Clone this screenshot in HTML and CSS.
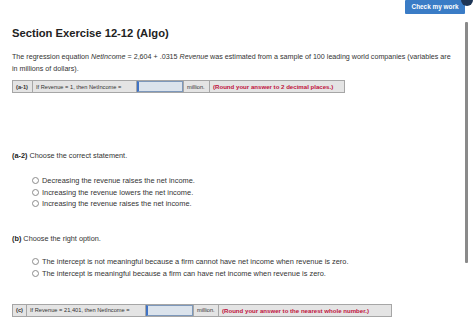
FILE: index.html
```html
<!DOCTYPE html>
<html lang="en">
<head>
    <meta charset="UTF-8">
    <meta name="viewport" content="width=device-width, initial-scale=1.0">
    <title>Section Exercise 12-12</title>
    <link rel="stylesheet" href="styles.css">
</head>
<body>

<header class="topbar">
    <div class="check-wrap">
        <a href="#" class="btn-check">Check my work</a>
        <span class="badge" aria-label="help"></span>
    </div>
</header>

<div class="page">
    <main class="content">
        <h1 class="title">Section Exercise 12-12 (Algo)</h1>

        <p class="intro">
            The regression equation <em>NetIncome</em> = 2,604 + .0315 <em>Revenue</em> was estimated from a sample of 100 leading world companies (variables are in millions of dollars).
        </p>

        <table class="answer-row row-a1">
            <colgroup>
                <col class="c-tag"><col class="c-label"><col class="c-field"><col class="c-unit"><col class="c-hint">
            </colgroup>
            <tr>
                <td class="tag">(a-1)</td>
                <td class="label">If Revenue = 1, then NetIncome =</td>
                <td class="field"><input type="text" class="answer"></td>
                <td class="unit">million.</td>
                <td class="hint">(Round your answer to 2 decimal places.)</td>
            </tr>
        </table>

        <div class="question q-a2">
            <p class="prompt"><b>(a-2)</b> Choose the correct statement.</p>
            <ul class="options">
                <li><span class="radio"></span>Decreasing the revenue raises the net income.</li>
                <li><span class="radio"></span>Increasing the revenue lowers the net income.</li>
                <li><span class="radio"></span>Increasing the revenue raises the net income.</li>
            </ul>
        </div>

        <div class="question q-b">
            <p class="prompt"><b>(b)</b> Choose the right option.</p>
            <ul class="options">
                <li><span class="radio"></span>The intercept is not meaningful because a firm cannot have net income when revenue is zero.</li>
                <li><span class="radio"></span>The intercept is meaningful because a firm can have net income when revenue is zero.</li>
            </ul>
        </div>

        <table class="answer-row row-c">
            <colgroup>
                <col class="c-tag"><col class="c-label"><col class="c-field"><col class="c-unit"><col class="c-hint">
            </colgroup>
            <tr>
                <td class="tag">(c)</td>
                <td class="label">If Revenue = 21,401, then NetIncome =</td>
                <td class="field"><input type="text" class="answer"></td>
                <td class="unit">million.</td>
                <td class="hint">(Round your answer to the nearest whole number.)</td>
            </tr>
        </table>
    </main>

    <div class="scroll-track">
        <div class="scroll-thumb"></div>
    </div>
</div>

</body>
</html>
```

FILE: styles.css
```css
body {
    margin: 0;
    font-family: 'Liberation Sans', Arial, sans-serif;
    color: #333333;
    background: #ffffff;
    overflow: hidden;
}

.topbar {
    height: 14px;
    display: flex;
    justify-content: flex-end;
    padding-right: 9px;
}

.check-wrap {
    position: relative;
}

.btn-check {
    display: block;
    width: 60px;
    height: 14px;
    line-height: 13px;
    text-align: center;
    background-color: #3a7cc6;
    color: #ffffff;
    font-size: 6.4px;
    font-weight: bold;
    text-decoration: none;
    border-radius: 1px;
}

.badge {
    position: absolute;
    top: -6px;
    right: -8px;
    width: 12px;
    height: 12px;
    border-radius: 50%;
    background-color: #1d3557;
}

.page {
    display: flex;
}

.content {
    flex: 1;
    padding-left: 12px;
}

.scroll-track {
    width: 4px;
    margin: 8px 5px 0 10px;
}

.scroll-thumb {
    width: 3px;
    height: 241px;
    background-color: #8a8a8a;
    border-radius: 1px;
}

.title {
    font-size: 11.2px;
    font-weight: bold;
    color: #222222;
    margin: 13px 0 0;
    line-height: 12px;
}

.intro {
    font-size: 7.15px;
    line-height: 12px;
    margin: 12px 0 0;
    padding-right: 4px;
}

/* answer rows */

.answer-row {
    border-collapse: collapse;
    table-layout: fixed;
    background-color: #e4e4e4;
    font-size: 5.7px;
    margin-top: 5px;
}

.answer-row td {
    border: 1px solid #a6a6a6;
    height: 11px;
    padding: 0 3px;
    white-space: nowrap;
    overflow: hidden;
}

.answer-row .tag {
    font-weight: bold;
}

.answer-row .field {
    padding: 0;
    background-color: #ffffff;
}

.answer {
    display: block;
    width: 100%;
    height: 11px;
    box-sizing: border-box;
    margin: 0;
    border: 1px solid #7d98bb;
    border-left: 2px solid #3f72c4;
    background-color: #dbe3ec;
    padding: 0;
}

.answer-row .hint {
    color: #c0123c;
    font-weight: bold;
    font-size: 6.1px;
}

.row-a1 { width: 333px; }
.row-a1 .c-tag { width: 20px; }
.row-a1 .c-label { width: 104px; }
.row-a1 .c-field { width: 47px; }
.row-a1 .c-unit { width: 26px; }

.row-c { width: 380px; }
.row-c .c-tag { width: 14px; }
.row-c .c-label { width: 119px; }
.row-c .c-field { width: 48px; }
.row-c .c-unit { width: 25px; }

/* multiple choice */

.question {
    font-size: 7.3px;
}

.q-a2 {
    margin-top: 57px;
}

.q-b {
    margin-top: 23px;
}

.prompt {
    margin: 0;
    line-height: 12px;
}

.prompt b {
    color: #222222;
}

.options {
    list-style: none;
    margin: 13px 0 0;
    padding: 0 0 0 20px;
    font-size: 7.4px;
}

.options li {
    display: flex;
    align-items: center;
    height: 11.5px;
}

.q-b .options {
    margin-top: 11px;
}

.q-b .options li {
    height: 12px;
}

.q-b + .answer-row {
    margin-top: 24px;
}

.radio {
    width: 5px;
    height: 5px;
    border: 1px solid #8c8c8c;
    border-radius: 50%;
    background: #ffffff;
    margin-right: 3px;
    flex-shrink: 0;
}
```
